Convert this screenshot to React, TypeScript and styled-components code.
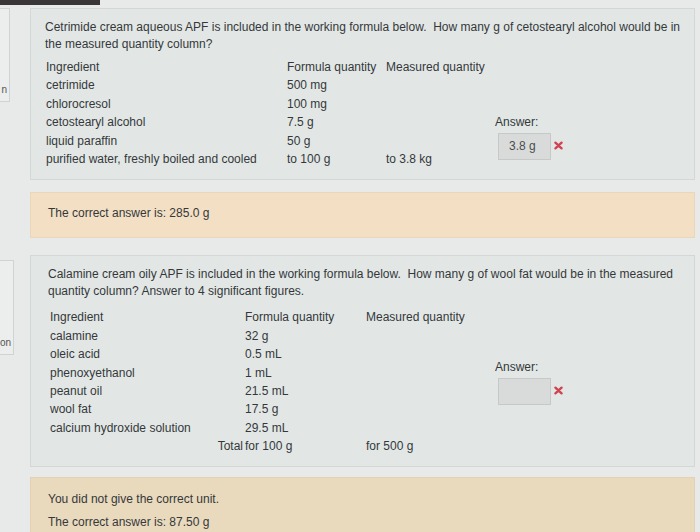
import React from 'react';
import styled, { createGlobalStyle } from 'styled-components';

type Row = [string, string, string];

interface QuestionProps {
  text: string;
  rows: Row[];
  cols: [number, number, number];
  inset: number;
  tableGap: number;
  answer: string;
  align: 'center' | 'flex-end';
  totalRow?: boolean;
}

const cetrimideRows: Row[] = [
  ['Ingredient', 'Formula quantity', 'Measured quantity'],
  ['cetrimide', '500 mg', ''],
  ['chlorocresol', '100 mg', ''],
  ['cetostearyl alcohol', '7.5 g', ''],
  ['liquid paraffin', '50 g', ''],
  ['purified water, freshly boiled and cooled', 'to 100 g', 'to 3.8 kg'],
];

const calamineRows: Row[] = [
  ['Ingredient', 'Formula quantity', 'Measured quantity'],
  ['calamine', '32 g', ''],
  ['oleic acid', '0.5 mL', ''],
  ['phenoxyethanol', '1 mL', ''],
  ['peanut oil', '21.5 mL', ''],
  ['wool fat', '17.5 g', ''],
  ['calcium hydroxide solution', '29.5 mL', ''],
  ['Total', 'for 100 g', 'for 500 g'],
];

const Question: React.FC<QuestionProps> = (props: QuestionProps) => {
  const last = props.rows.length - 1;
  return (
    <Card $inset={props.inset}>
      <Prompt>{props.text}</Prompt>
      <Body $gap={props.tableGap} $align={props.align}>
        <Table $cols={props.cols}>
          {props.rows.map((row, i) => (
            <React.Fragment key={i}>
              <Cell $right={props.totalRow && i === last}>{row[0]}</Cell>
              <Cell $pad={2}>{row[1]}</Cell>
              <Cell $pad={1}>{row[2]}</Cell>
            </React.Fragment>
          ))}
        </Table>
        <AnswerBlock $align={props.align}>
          <AnswerLabel>Answer:</AnswerLabel>
          <AnswerRow>
            <AnswerInput>{props.answer}</AnswerInput>
            <Cross viewBox="0 0 10 10">
              <path d="M1.6 1.8 L8.4 8.2 M8.4 1.8 L1.6 8.2" />
            </Cross>
          </AnswerRow>
        </AnswerBlock>
      </Body>
    </Card>
  );
};

const App: React.FC = () => {
  return (
    <Page>
      <GlobalStyle />
      <TopStrip />
      <Layout>
        <Sidebar>
          <SideBlock $width={10} $height={94}>n</SideBlock>
          <SideBlock $width={14} $height={95} $top={158}>on</SideBlock>
        </Sidebar>
        <Main>
          <Question
            text="Cetrimide cream aqueous APF is included in the working formula below.  How many g of cetostearyl alcohol would be in the measured quantity column?"
            rows={cetrimideRows}
            cols={[239, 100, 112]}
            inset={14}
            tableGap={5}
            answer="3.8 g"
            align="flex-end"
          />
          <Feedback $top={12}>
            <FeedbackLine>The correct answer is: 285.0 g</FeedbackLine>
          </Feedback>
          <Question
            text="Calamine cream oily APF is included in the working formula below.  How many g of wool fat would be in the measured quantity column? Answer to 4 significant figures."
            rows={calamineRows}
            cols={[193, 122, 132]}
            inset={17}
            tableGap={8}
            answer=""
            align="center"
            totalRow
          />
          <Feedback $top={10} $tall>
            <FeedbackLine>You did not give the correct unit.</FeedbackLine>
            <FeedbackLine>The correct answer is: 87.50 g</FeedbackLine>
          </Feedback>
        </Main>
      </Layout>
    </Page>
  );
};

export default App;

const GlobalStyle = createGlobalStyle`
  html, body {
    margin: 0;
    padding: 0;
    background: #e8eaea;
  }
  body {
    font-family: "Liberation Sans", Arial, sans-serif;
    font-size: 12px;
    color: #35383a;
  }
`

const Page = styled.div`
  width: 700px;
  height: 532px;
  overflow: hidden;
  background: #e8eaea;
`

const TopStrip = styled.div`
  width: 100px;
  height: 5px;
  background: #3a3537;
`

const Layout = styled.div`
  display: grid;
  grid-template-columns: 14px 665px;
  column-gap: 16px;
  margin-top: 3px;
`

const Sidebar = styled.div`
  display: flex;
  flex-direction: column;
`

const SideBlock = styled.div<{ $width: number; $height: number; $top?: number }>`
  width: ${p => p.$width}px;
  height: ${p => p.$height}px;
  margin-top: ${p => p.$top || 0}px;
  box-sizing: border-box;
  background: #eceeee;
  border: 1px solid #cfd3d2;
  border-left: none;
  display: flex;
  align-items: flex-end;
  justify-content: flex-end;
  padding: 0 2px 6px 0;
  font-size: 10px;
  color: #555;
`

const Main = styled.div`
  display: flex;
  flex-direction: column;
`

const Card = styled.div<{ $inset: number }>`
  background: #e2e7e6;
  border: 1px solid #d3d8d7;
  padding: 10px 14px 11px ${p => p.$inset}px;
  margin-top: ${p => (p.$inset > 15 ? 17 : 0)}px;
`

const Prompt = styled.div`
  line-height: 17px;
  white-space: pre-wrap;
`

const Body = styled.div<{ $gap: number; $align: string }>`
  display: flex;
  align-items: ${p => p.$align};
  margin-top: ${p => p.$gap}px;
`

const Table = styled.div<{ $cols: [number, number, number] }>`
  display: grid;
  grid-template-columns: ${p => p.$cols.map(c => `${c}px`).join(' ')};
  grid-auto-rows: 18.4px;
  margin-left: ${p => (p.$cols[0] < 200 ? 2 : 1)}px;
`

const Cell = styled.div<{ $pad?: number; $right?: boolean }>`
  line-height: 18.4px;
  white-space: nowrap;
  padding-left: ${p => p.$pad || 0}px;
  text-align: ${p => (p.$right ? 'right' : 'left')};
`

const AnswerBlock = styled.div<{ $align: string }>`
  display: flex;
  flex-direction: column;
  margin-bottom: ${p => (p.$align === 'flex-end' ? 8 : 0)}px;
`

const AnswerLabel = styled.div`
  line-height: 16px;
  margin-left: -2px;
`

const AnswerRow = styled.div`
  display: flex;
  align-items: center;
  margin-top: 3px;
  margin-left: 1px;
`

const AnswerInput = styled.div`
  box-sizing: border-box;
  width: 53px;
  height: 27px;
  background: #d9dbda;
  border: 1px solid #c7c9c9;
  padding-left: 10px;
  line-height: 25px;
  color: #4b4d4e;
`

const Cross = styled.svg`
  width: 9px;
  height: 9px;
  margin-left: 3px;
  margin-bottom: 2px;
  fill: none;
  stroke: #cf4450;
  stroke-width: 2.6;
  stroke-linecap: round;
`

const Feedback = styled.div<{ $top: number; $tall?: boolean }>`
  margin-top: ${p => p.$top}px;
  background: ${p => (p.$tall ? '#e9d9bd' : '#f2dfc4')};
  border: 1px solid ${p => (p.$tall ? '#e2d1b4' : '#ead6b8')};
  padding: ${p => (p.$tall ? '13px 17px 20px' : '12px 17px 15px')};
  display: flex;
  flex-direction: column;
  gap: 6px;
`

const FeedbackLine = styled.div`
  line-height: 17px;
`
